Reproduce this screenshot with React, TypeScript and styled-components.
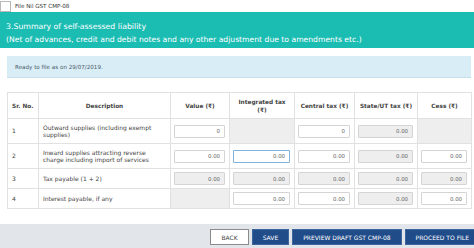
import React from "react";
import styled, { createGlobalStyle } from "styled-components";

type Cell =
  | { kind: "input"; value: string; focus?: boolean }
  | { kind: "disabled"; value: string }
  | { kind: "blank" };

type Row = {
  sr: string;
  description: string;
  cells: Cell[];
};

// rows of the liability table, columns are Value / IGST / CGST / SGST / Cess
const rows: Row[] = [
  {
    sr: "1",
    description: "Outward supplies (including exempt supplies)",
    cells: [
      { kind: "input", value: "0" },
      { kind: "blank" },
      { kind: "input", value: "0" },
      { kind: "disabled", value: "0.00" },
      { kind: "blank" },
    ],
  },
  {
    sr: "2",
    description:
      "Inward supplies attracting reverse charge including import of services",
    cells: [
      { kind: "input", value: "0.00" },
      { kind: "input", value: "0.00", focus: true },
      { kind: "input", value: "0.00" },
      { kind: "disabled", value: "0.00" },
      { kind: "input", value: "0.00" },
    ],
  },
  {
    sr: "3",
    description: "Tax payable (1 + 2)",
    cells: [
      { kind: "disabled", value: "0.00" },
      { kind: "disabled", value: "0.00" },
      { kind: "disabled", value: "0.00" },
      { kind: "disabled", value: "0.00" },
      { kind: "disabled", value: "0.00" },
    ],
  },
  {
    sr: "4",
    description: "Interest payable, if any",
    cells: [
      { kind: "blank" },
      { kind: "input", value: "0.00" },
      { kind: "input", value: "0.00" },
      { kind: "disabled", value: "0.00" },
      { kind: "input", value: "0.00" },
    ],
  },
];

const headers = [
  { label: "Sr. No.", width: 31, align: "left" },
  { label: "Description", width: 132, align: "center" },
  { label: "Value (₹)", width: 59, align: "center" },
  { label: "Integrated tax (₹)", width: 65, align: "center" },
  { label: "Central tax (₹)", width: 60, align: "center" },
  { label: "State/UT tax (₹)", width: 63, align: "center" },
  { label: "Cess (₹)", width: 54, align: "center" },
];

const App: React.FC = () => {
  return (
    <Page>
      <GlobalStyle />
      <CheckRow>
        <Checkbox />
        <CheckLabel>File Nil GST CMP-08</CheckLabel>
      </CheckRow>

      <Banner>
        <BannerTitle>3.Summary of self-assessed liability</BannerTitle>
        <BannerNote>
          (Net of advances, credit and debit notes and any other adjustment
          due to amendments etc.)
        </BannerNote>
      </Banner>

      <Content>
        <InfoBox>Ready to file as on 29/07/2019.</InfoBox>

        <Table>
          <colgroup>
            {headers.map((h) => (
              <col key={h.label} style={{ width: h.width }} />
            ))}
          </colgroup>
          <thead>
            <tr>
              {headers.map((h) => (
                <Th key={h.label} $align={h.align}>
                  {h.label}
                </Th>
              ))}
            </tr>
          </thead>
          <tbody>
            {rows.map((row) => (
              <tr key={row.sr}>
                <Td>{row.sr}</Td>
                <Td>{row.description}</Td>
                {row.cells.map((cell, i) =>
                  cell.kind === "blank" ? (
                    <BlankTd key={i} />
                  ) : (
                    <InputTd key={i}>
                      <AmountBox
                        $disabled={cell.kind === "disabled"}
                        $focus={cell.kind === "input" && !!cell.focus}
                      >
                        {cell.value}
                      </AmountBox>
                    </InputTd>
                  )
                )}
              </tr>
            ))}
          </tbody>
        </Table>
      </Content>

      <Footer>
        <Button $variant="light">BACK</Button>
        <Button>SAVE</Button>
        <Button>PREVIEW DRAFT GST CMP-08</Button>
        <Button>PROCEED TO FILE</Button>
      </Footer>
    </Page>
  );
};

// CSS for the page

const GlobalStyle = createGlobalStyle`
  html, body {
    margin: 0;
    padding: 0;
    background: #ffffff;
    overflow: hidden;
  }
`;

const Page = styled.div`
  width: 474px;
  height: 248px;
  overflow: hidden;
  font-family: "DejaVu Sans", Verdana, sans-serif;
  color: #333333;
`;

const CheckRow = styled.div`
  display: flex;
  align-items: center;
  height: 12px;
  gap: 4px;
`;

const Checkbox = styled.span`
  width: 9px;
  height: 9px;
  margin-top: 1px;
  border: 1px solid #b9b9b9;
  background: #ffffff;
`;

const CheckLabel = styled.span`
  font-size: 5.6px;
  color: #333333;
`;

const Banner = styled.div`
  height: 36px;
  background: #1bbdb3;
  color: #ffffff;
  padding: 10px 0 0 6px;
  box-sizing: border-box;
  display: flex;
  flex-direction: column;
  gap: 3px;
  white-space: nowrap;
`;

const BannerTitle = styled.div`
  font-size: 7.8px;
  line-height: 10px;
`;

const BannerNote = styled.div`
  font-size: 7.65px;
  line-height: 10px;
`;

const Content = styled.div`
  padding: 8px 3px 0 7px;
`;

const InfoBox = styled.div`
  height: 22px;
  box-sizing: border-box;
  background: #d9edf7;
  border-bottom: 1px solid #c7dfeb;
  padding-left: 8px;
  display: flex;
  align-items: center;
  font-size: 5.6px;
  color: #4a5a66;
`;

const Table = styled.table`
  margin-top: 14px;
  width: 464px;
  table-layout: fixed;
  border-collapse: collapse;
  font-size: 6px;
  color: #444444;

  td,
  th {
    border: 1px solid #e1e1e1;
  }

  tbody tr:nth-child(1),
  tbody tr:nth-child(2) {
    height: 25px;
  }

  tbody tr:nth-child(3),
  tbody tr:nth-child(4) {
    height: 20px;
  }
`;

const Th = styled.th<{ $align: string }>`
  height: 25px;
  padding: 0 4px;
  text-align: ${(p) => p.$align};
  font-weight: bold;
  font-size: 5.8px;
  line-height: 8px;
  color: #444444;
  background: #ffffff;
`;

const Td = styled.td`
  padding: 0 4px;
  line-height: 7.5px;
  vertical-align: middle;
`;

const BlankTd = styled.td`
  background: #eeeeee;
`;

const InputTd = styled.td`
  padding: 0 4px 0 3px;
`;

const AmountBox = styled.div<{ $disabled?: boolean; $focus?: boolean }>`
  height: 13px;
  box-sizing: border-box;
  border: 1px solid ${(p) => (p.$focus ? "#7fb3dc" : "#d4d4d4")};
  border-radius: 1px;
  background: ${(p) => (p.$disabled ? "#eeeeee" : "#ffffff")};
  display: flex;
  align-items: center;
  justify-content: flex-end;
  padding-right: 4px;
  font-size: 5.4px;
  color: #666666;
`;

const Footer = styled.div`
  margin-top: 15px;
  height: 26px;
  background: #e2e6ea;
  display: flex;
  justify-content: flex-end;
  align-items: flex-start;
  gap: 3px;
  padding-top: 5px;
  box-sizing: border-box;
  margin-right: -6px;
`;

const Button = styled.button<{ $variant?: "light" }>`
  height: 16px;
  padding: 0 10px;
  border: 1px solid ${(p) => (p.$variant === "light" ? "#8a8a8a" : "#3d669e")};
  border-radius: 0;
  background: ${(p) => (p.$variant === "light" ? "#ffffff" : "#204c8a")};
  color: ${(p) => (p.$variant === "light" ? "#444444" : "#ffffff")};
  font-family: "DejaVu Sans", Verdana, sans-serif;
  font-size: 6px;
  white-space: nowrap;
`;

export default App;
